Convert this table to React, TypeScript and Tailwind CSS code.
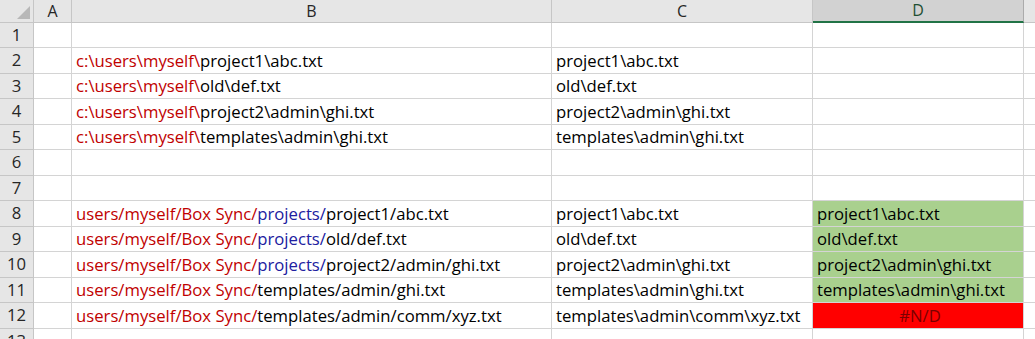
import { FC, ReactNode } from 'react'

type Seg = { t: string; c?: 'red' | 'blue' }

const segColor = {
  red: 'text-[#c00000]',
  blue: 'text-[#2020a0]'
}

const rows: Array<{ b?: Seg[]; c?: string; d?: string; fill?: 'green' | 'red' }> = [
  {},
  { b: [{ t: 'c:\\users\\myself\\', c: 'red' }, { t: 'project1\\abc.txt' }], c: 'project1\\abc.txt' },
  { b: [{ t: 'c:\\users\\myself\\', c: 'red' }, { t: 'old\\def.txt' }], c: 'old\\def.txt' },
  { b: [{ t: 'c:\\users\\myself\\', c: 'red' }, { t: 'project2\\admin\\ghi.txt' }], c: 'project2\\admin\\ghi.txt' },
  { b: [{ t: 'c:\\users\\myself\\', c: 'red' }, { t: 'templates\\admin\\ghi.txt' }], c: 'templates\\admin\\ghi.txt' },
  {},
  {},
  {
    b: [{ t: 'users/myself/Box Sync/', c: 'red' }, { t: 'projects/', c: 'blue' }, { t: 'project1/abc.txt' }],
    c: 'project1\\abc.txt',
    d: 'project1\\abc.txt',
    fill: 'green'
  },
  {
    b: [{ t: 'users/myself/Box Sync/', c: 'red' }, { t: 'projects/', c: 'blue' }, { t: 'old/def.txt' }],
    c: 'old\\def.txt',
    d: 'old\\def.txt',
    fill: 'green'
  },
  {
    b: [{ t: 'users/myself/Box Sync/', c: 'red' }, { t: 'projects/', c: 'blue' }, { t: 'project2/admin/ghi.txt' }],
    c: 'project2\\admin\\ghi.txt',
    d: 'project2\\admin\\ghi.txt',
    fill: 'green'
  },
  {
    b: [{ t: 'users/myself/Box Sync/', c: 'red' }, { t: 'templates/admin/ghi.txt' }],
    c: 'templates\\admin\\ghi.txt',
    d: 'templates\\admin\\ghi.txt',
    fill: 'green'
  },
  {
    b: [{ t: 'users/myself/Box Sync/', c: 'red' }, { t: 'templates/admin/comm/xyz.txt' }],
    c: 'templates\\admin\\comm\\xyz.txt',
    d: '#N/D',
    fill: 'red'
  },
  {}
]

const heights = ['h-[25px]', 'h-[26px]']

const Cell: FC<{ className?: string; children?: ReactNode }> = ({ className, children }) => (
  <div
    className={`flex items-end pb-[2px] pl-[4px] leading-[20px] border-r border-b border-[#d4d4d4] overflow-hidden whitespace-nowrap ${className ?? ''}`}
  >
    {children}
  </div>
)

const ColHeader: FC<{ label: string; selected?: boolean }> = ({ label, selected }) => (
  <div
    className={
      selected
        ? 'h-[23px] leading-[19px] text-[16px] flex items-center justify-center bg-[#d2d2d2] border-r border-[#ababab] border-b-2 border-b-[#217346] text-[#1e4f33]'
        : 'h-[23px] leading-[19px] text-[16px] flex items-center justify-center bg-[#e6e6e6] border-r border-b border-[#c6c6c6] text-[#262626]'
    }
  >
    {label}
  </div>
)

export default function App() {
  return (
    <div
      className="w-[1035px] h-[339px] overflow-hidden bg-white text-[16.7px] text-black"
      style={{ fontFamily: '"Open Sans", "Liberation Sans", sans-serif' }}
    >
      <div className="grid grid-cols-[34px_38px_480px_261px_211px_11px]">
        {/* header row */}
        <div className="relative h-[23px] bg-[#e6e6e6] border-r border-b border-[#c6c6c6]">
          <svg className="absolute right-[3px] bottom-[3px]" width="13" height="13" viewBox="0 0 13 13">
            <polygon points="13,0 13,13 0,13" fill="#b8b8b8" />
          </svg>
        </div>
        <ColHeader label="A" />
        <ColHeader label="B" />
        <ColHeader label="C" />
        <ColHeader label="D" selected />
        <div className="h-[23px] bg-[#e6e6e6] border-b border-[#c6c6c6]" />

        {rows.map((row, i) => {
          const h = heights[i % 2]
          return (
            <div key={i} className="contents">
              <div
                className={`${h} leading-none flex items-center justify-center bg-[#e6e6e6] border-r border-b border-[#c6c6c6] text-[#262626]`}
              >
                {i + 1}
              </div>
              <Cell className={h} />
              <Cell className={h}>
                {row.b?.map((s, k) => (
                  <span key={k} className={s.c ? segColor[s.c] : ''}>
                    {s.t}
                  </span>
                ))}
              </Cell>
              <Cell className={h}>{row.c}</Cell>
              <Cell
                className={`${h} ${
                  row.fill === 'green'
                    ? 'bg-[#a9d08e]'
                    : row.fill === 'red'
                      ? 'bg-[#ff0000] justify-center pl-0 text-[#7a0000]'
                      : ''
                }`}
              >
                {row.d}
              </Cell>
              <div className={`${h} border-b border-[#d4d4d4]`} />
            </div>
          )
        })}
      </div>
    </div>
  )
}
